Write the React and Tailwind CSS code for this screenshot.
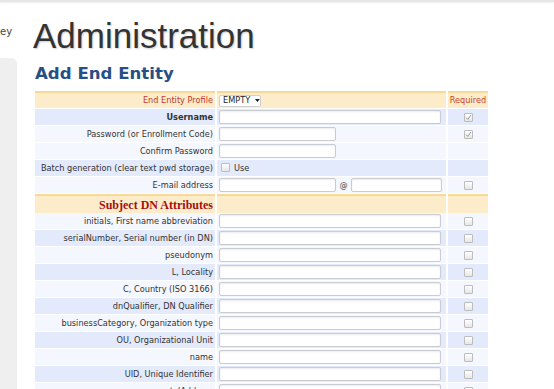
import React from 'react';

const dnRows = [
  'initials, First name abbreviation',
  'serialNumber, Serial number (in DN)',
  'pseudonym',
  'L, Locality',
  'C, Country (ISO 3166)',
  'dnQualifier, DN Qualifier',
  'businessCategory, Organization type',
  'OU, Organizational Unit',
  'name',
  'UID, Unique Identifier',
  'postalAddress',
];

function Box({ checked }) {
  return (
    <span className="inline-flex items-center justify-center w-[9px] h-[9px] border border-[#bdbdbd] rounded-[1px] bg-gradient-to-b from-white to-[#e6e6e6]">
      {checked && (
        <svg width="7" height="7" viewBox="0 0 7 7">
          <path d="M1 3.6 L2.8 5.4 L6 1" fill="none" stroke="#9a9a9a" strokeWidth="1" />
        </svg>
      )}
    </span>
  );
}

function Field({ w }) {
  return (
    <div
      className={`h-[14px] bg-white border border-[#c9ccd3] rounded-[2px] shadow-[inset_0_1px_2px_rgba(0,0,0,0.08)] ${w}`}
    />
  );
}

function Row({ label, bold, bg, children, req }) {
  const cell = bg === 'blue' ? 'bg-[#e3eafc]' : 'bg-[#f5f7fe]';
  return (
    <div className="grid grid-cols-[180px_229px_40px] gap-x-[2px] h-[16px]">
      <div className={`${cell} flex items-center justify-end pr-[2px] text-[#333] ${bold ? 'font-bold' : ''}`}>
        {label}
      </div>
      <div className={`${cell} flex items-center pl-[2px]`}>{children}</div>
      <div className={`${cell} flex items-center justify-center`}>
        {req === 'on' && <Box checked />}
        {req === 'off' && <Box />}
      </div>
    </div>
  );
}

export default function App() {
  return (
    <div className="w-[554px] h-[389px] overflow-hidden bg-white font-['DejaVu_Sans',sans-serif]">
      <div className="h-[2px] bg-[#e6e6e6] shadow-[0_1px_2px_rgba(0,0,0,0.08)]" />
      <div className="flex">
        <div className="w-[17px] shrink-0 flex flex-col">
          <div className="mt-[22px] h-[16px] text-[10px] text-[#444] leading-[16px] overflow-hidden whitespace-nowrap">
            ey
          </div>
          <div className="mt-[18px] h-[340px] bg-[#efefef] rounded-tr-[6px]" />
        </div>

        <div className="ml-[18px] flex flex-col">
          <h1 className="mt-[14px] -ml-[2px] text-[35px] leading-[40px] text-[#333] font-['Liberation_Sans',sans-serif] [text-shadow:1px_1px_2px_rgba(0,0,0,0.2)]">
            Administration
          </h1>
          <h2 className="mt-[8px] text-[16.6px] leading-[20px] font-bold text-[#274f86]">
            Add End Entity
          </h2>

          <div className="mt-[7px] flex flex-col gap-y-px text-[8.2px]">
            <div className="grid grid-cols-[180px_229px_40px] gap-x-[2px] h-[17px]">
              <div className="bg-[#fdecca] border-t-2 border-[#f8d896] flex items-center justify-end pr-[2px] text-[#c0392b]">
                End Entity Profile
              </div>
              <div className="bg-[#fdecca] border-t-2 border-[#f8d896] flex items-center pl-[2px]">
                <div className="h-[12px] w-[42px] bg-white border border-[#cfcfcf] rounded-[2px] flex items-center pl-[3px] gap-[5px] text-[#222]">
                  EMPTY
                  <svg width="5" height="3" viewBox="0 0 5 3">
                    <path d="M0 0 L5 0 L2.5 3 Z" fill="#222" />
                  </svg>
                </div>
              </div>
              <div className="bg-[#fdecca] border-t-2 border-[#f8d896] flex items-center justify-center text-[#c8452c]">
                Required
              </div>
            </div>

            <Row label="Username" bold bg="blue" req="on">
              <Field w="w-[222px]" />
            </Row>
            <Row label="Password (or Enrollment Code)" bg="light" req="on">
              <Field w="w-[117px]" />
            </Row>
            <Row label="Confirm Password" bg="light">
              <Field w="w-[117px]" />
            </Row>
            <Row label="Batch generation (clear text pwd storage)" bg="blue">
              <div className="flex items-center gap-[4px] pl-[2px] text-[#333]">
                <Box />
                <span>Use</span>
              </div>
            </Row>
            <Row label="E-mail address" bg="light" req="off">
              <Field w="w-[117px]" />
              <span className="w-[15px] text-center text-[#777] font-bold">@</span>
              <Field w="w-[91px]" />
            </Row>

            <div className="grid grid-cols-[180px_229px_40px] gap-x-[2px] h-[18px]">
              <div className="bg-[#fdecca] border-t-2 border-[#f8d896] flex items-center justify-end pr-[2px] text-[12px] font-bold text-[#a50f0f] font-['Liberation_Serif',serif]">
                Subject DN Attributes
              </div>
              <div className="bg-[#fdecca] border-t-2 border-[#f8d896]" />
              <div className="bg-[#fdecca] border-t-2 border-[#f8d896]" />
            </div>

            {dnRows.map((label, i) => (
              <Row key={label} label={label} bg={i % 2 === 0 ? 'light' : 'blue'} req="off">
                <Field w="w-[222px]" />
              </Row>
            ))}
          </div>
        </div>
      </div>
    </div>
  );
}
